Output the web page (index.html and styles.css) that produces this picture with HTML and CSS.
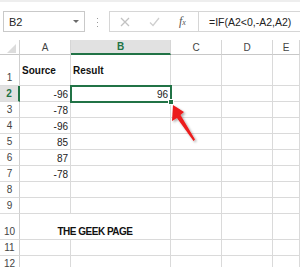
FILE: index.html
```html
<!DOCTYPE html>
<html>
<head>
<meta charset="utf-8">
<link rel="stylesheet" href="styles.css">
</head>
<body>
<div class="app">
  <div class="toolbar">
    <div class="namebox"><span class="ref">B2</span><span class="caret"></span></div>
    <div class="grip"><svg width="3" height="9" viewBox="0 0 3 9"><rect x="1" y="0" width="1" height="1" fill="#9a9a9a"/><rect x="1" y="4" width="1" height="1" fill="#9a9a9a"/><rect x="1" y="8" width="1" height="1" fill="#9a9a9a"/></svg></div>
    <div class="fxbox">
      <svg class="ico" width="10" height="10" viewBox="0 0 10 10"><path d="M1 1 L9 9 M9 1 L1 9" stroke="#c2c2c2" stroke-width="1.3" fill="none"/></svg>
      <svg class="ico" width="11" height="10" viewBox="0 0 11 10"><path d="M1 5.5 L4 8.5 L10 1" stroke="#cfcfcf" stroke-width="1.3" fill="none"/></svg>
      <span class="fx">f<span class="fxsub">x</span></span>
    </div>
    <div class="formula">=IF(A2&lt;0,-A2,A2)</div>
  </div>
  <div class="sheet">
    <div class="corner"><span class="tri"></span></div>
    <div class="ch">A</div>
    <div class="ch ch-sel">B</div>
    <div class="ch">C</div>
    <div class="ch">D</div>
    <div class="ch">E</div>

    <div class="rh">1</div>
    <div class="c mid bold">Source</div>
    <div class="c mid bold">Result</div>
    <div class="c"></div><div class="c"></div><div class="c"></div>

    <div class="rh rh-sel">2</div>
    <div class="c num">-96</div>
    <div class="c num">96</div>
    <div class="c"></div><div class="c"></div><div class="c"></div>

    <div class="rh">3</div>
    <div class="c num">-78</div>
    <div class="c"></div><div class="c"></div><div class="c"></div><div class="c"></div>

    <div class="rh">4</div>
    <div class="c num">-96</div>
    <div class="c"></div><div class="c"></div><div class="c"></div><div class="c"></div>

    <div class="rh">5</div>
    <div class="c num">85</div>
    <div class="c"></div><div class="c"></div><div class="c"></div><div class="c"></div>

    <div class="rh">6</div>
    <div class="c num">87</div>
    <div class="c"></div><div class="c"></div><div class="c"></div><div class="c"></div>

    <div class="rh">7</div>
    <div class="c num">-78</div>
    <div class="c"></div><div class="c"></div><div class="c"></div><div class="c"></div>

    <div class="rh">8</div>
    <div class="c"></div><div class="c"></div><div class="c"></div><div class="c"></div><div class="c"></div>

    <div class="rh">9</div>
    <div class="c"></div><div class="c"></div><div class="c"></div><div class="c"></div><div class="c"></div>

    <div class="rh">10</div>
    <div class="c merged bold">THE GEEK PAGE</div>
    <div class="c"></div><div class="c"></div><div class="c"></div>

    <div class="rh">11</div>
    <div class="c"></div><div class="c"></div><div class="c"></div><div class="c"></div><div class="c"></div>

    <div class="rh">12</div>
    <div class="c"></div><div class="c"></div><div class="c"></div><div class="c"></div><div class="c"></div>
  </div>
  <div class="selection"><span class="handle"></span></div>
  <svg class="arrow" width="300" height="267" viewBox="0 0 300 267">
    <defs>
      <filter id="sh" x="-50%" y="-50%" width="200%" height="200%">
        <feDropShadow dx="1.5" dy="1.5" stdDeviation="1.2" flood-color="#000" flood-opacity="0.35"/>
      </filter>
    </defs>
    <polygon points="173,105 184,112 180.5,115 195,139.5 193.5,141 177,118 172,121" fill="#ec1c1c" filter="url(#sh)"/>
  </svg>
</div>
</body>
</html>
```
FILE: styles.css
```css
* { box-sizing: border-box; }
html, body { margin: 0; padding: 0; }
body {
  width: 300px;
  height: 267px;
  overflow: hidden;
  background: #fff;
  font-family: "Liberation Sans", Arial, sans-serif;
}
.app {
  position: relative;
  width: 300px;
  height: 267px;
  overflow: hidden;
}
.toolbar {
  height: 40px;
  display: flex;
  align-items: flex-start;
  padding-top: 11px;
  border-top: 2px solid #eeeeee;
}
.namebox {
  margin-left: 3px;
  width: 82px;
  height: 21px;
  margin-top: -2px;
  border: 1px solid #c9c9c9;
  display: flex;
  align-items: center;
  justify-content: space-between;
  padding: 0 5px 0 5px;
  font-size: 11px;
  color: #262626;
}
.caret {
  width: 0; height: 0;
  border-left: 3px solid transparent;
  border-right: 3px solid transparent;
  border-top: 3px solid #6a6a6a;
}
.grip {
  width: 24px;
  height: 19px;
  display: flex;
  align-items: center;
  justify-content: center;
}
.fxbox {
  width: 90px;
  height: 21px;
  margin-top: -2px;
  border: 1px solid #d6d6d6;
  display: flex;
  align-items: center;
  padding-left: 10px;
  gap: 0;
}
.fxbox .ico:first-child { margin-right: 19px; }
.fxbox .ico:nth-child(2) { margin-right: 19px; }
.fx {
  font-family: "Liberation Serif", "Times New Roman", serif;
  font-style: italic;
  font-size: 12px;
  color: #555;
}
.fxsub { font-size: 8px; }
.formula {
  flex: 1;
  height: 21px;
  margin-top: -2px;
  margin-left: -1px;
  border: 1px solid #d6d6d6;
  border-right: none;
  font-size: 10.5px;
  color: #222;
  padding-left: 10px;
  display: flex;
  align-items: center;
}
.sheet {
  display: grid;
  grid-template-columns: 20px 51px 100px 51px 51px 27px;
  grid-template-rows: 15px 31px repeat(8, 16px) 26px 16px 16px;
  font-size: 10px;
}
.corner {
  position: relative;
  border-right: 1px solid #d0d0d0;
  border-bottom: 1px solid #c8c8c8;
}
.tri {
  position: absolute;
  right: 3px;
  bottom: 1px;
  width: 0; height: 0;
  border-left: 9px solid transparent;
  border-bottom: 9px solid #dcdcdc;
}
.ch {
  border-right: 1px solid #d6d6d6;
  border-bottom: 1px solid #c8c8c8;
  display: flex;
  align-items: center;
  justify-content: center;
  color: #444;
  font-size: 10px;
}
.ch-sel {
  background: #e1e1e1;
  border-bottom: 2px solid #217346;
  color: #217346;
  font-weight: bold;
}
.rh {
  border-right: 1px solid #cfcfcf;
  border-bottom: 1px solid #dcdcdc;
  display: flex;
  align-items: flex-end;
  justify-content: center;
  padding-bottom: 2px;
  color: #444;
  font-size: 10px;
}
.rh-sel {
  background: #e1e1e1;
  border-right: 2px solid #217346;
  color: #217346;
  font-weight: bold;
}
.c {
  border-right: 1px solid #dadada;
  border-bottom: 1px solid #dadada;
  display: flex;
  align-items: flex-end;
  padding: 0 2px 1px 2px;
  color: #222;
  white-space: nowrap;
}
.c.mid { align-items: center; padding-bottom: 0; }
.bold { font-weight: bold; color: #111; }
.num { justify-content: flex-end; }
.merged {
  grid-column: span 2;
  justify-content: center;
  padding-bottom: 2px;
  letter-spacing: -0.5px;
}
.selection {
  position: absolute;
  left: 70px;
  top: 85px;
  width: 102px;
  height: 18px;
  border: 2px solid #217346;
}
.handle {
  position: absolute;
  right: -4px;
  bottom: -4px;
  width: 6px;
  height: 6px;
  background: #217346;
  border: 1px solid #fff;
}
.arrow {
  position: absolute;
  left: 0;
  top: 0;
  pointer-events: none;
}
```
